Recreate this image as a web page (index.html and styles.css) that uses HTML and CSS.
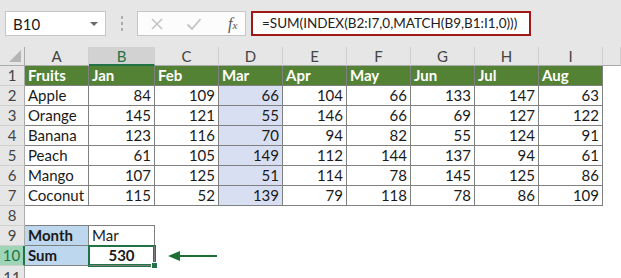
FILE: index.html
```html
<!DOCTYPE html>
<html lang="en">
<head>
    <meta charset="UTF-8">
    <title>INDEX MATCH sum</title>
    <link rel="stylesheet" href="styles.css">
</head>
<body>
    <div class="toolbar">
        <div class="namebox">
            <span>B10</span>
            <span class="caret"></span>
        </div>
        <div class="dots"><i></i><i></i><i></i></div>
        <div class="fbuttons">
            <svg class="ico" width="14" height="14" viewBox="0 0 14 14"><path d="M2 2 L12 12 M12 2 L2 12" stroke="#c3c3c3" stroke-width="1.6" fill="none"/></svg>
            <svg class="ico" width="16" height="14" viewBox="0 0 16 14"><path d="M1.5 7.5 L6 12 L14.5 2" stroke="#c3c3c3" stroke-width="1.8" fill="none"/></svg>
            <span class="fx">f<sub>x</sub></span>
        </div>
        <div class="formula">=SUM(INDEX(B2:I7,0,MATCH(B9,B1:I1,0)))</div>
    </div>

    <div class="sheet">
        <!-- column headers -->
        <div class="ch corner"><span class="tri"></span></div>
        <div class="ch">A</div>
        <div class="ch sel">B</div>
        <div class="ch">C</div>
        <div class="ch">D</div>
        <div class="ch">E</div>
        <div class="ch">F</div>
        <div class="ch">G</div>
        <div class="ch">H</div>
        <div class="ch">I</div>
        <div class="ch"></div>

        <!-- row 1 -->
        <div class="rh">1</div>
        <div class="c hd">Fruits</div>
        <div class="c hd">Jan</div>
        <div class="c hd">Feb</div>
        <div class="c hd">Mar</div>
        <div class="c hd">Apr</div>
        <div class="c hd">May</div>
        <div class="c hd">Jun</div>
        <div class="c hd">Jul</div>
        <div class="c hd">Aug</div>
        <div class="e"></div>

        <div class="rh">2</div>
        <div class="c">Apple</div>
        <div class="c n">84</div><div class="c n">109</div><div class="c n mar">66</div><div class="c n">104</div>
        <div class="c n">66</div><div class="c n">133</div><div class="c n">147</div><div class="c n">63</div>
        <div class="e"></div>

        <div class="rh">3</div>
        <div class="c">Orange</div>
        <div class="c n">145</div><div class="c n">121</div><div class="c n mar">55</div><div class="c n">146</div>
        <div class="c n">66</div><div class="c n">69</div><div class="c n">127</div><div class="c n">122</div>
        <div class="e"></div>

        <div class="rh">4</div>
        <div class="c">Banana</div>
        <div class="c n">123</div><div class="c n">116</div><div class="c n mar">70</div><div class="c n">94</div>
        <div class="c n">82</div><div class="c n">55</div><div class="c n">124</div><div class="c n">91</div>
        <div class="e"></div>

        <div class="rh">5</div>
        <div class="c">Peach</div>
        <div class="c n">61</div><div class="c n">105</div><div class="c n mar">149</div><div class="c n">112</div>
        <div class="c n">144</div><div class="c n">137</div><div class="c n">94</div><div class="c n">61</div>
        <div class="e"></div>

        <div class="rh">6</div>
        <div class="c">Mango</div>
        <div class="c n">107</div><div class="c n">125</div><div class="c n mar">51</div><div class="c n">114</div>
        <div class="c n">78</div><div class="c n">145</div><div class="c n">125</div><div class="c n">86</div>
        <div class="e"></div>

        <div class="rh">7</div>
        <div class="c">Coconut</div>
        <div class="c n">115</div><div class="c n">52</div><div class="c n mar">139</div><div class="c n">79</div>
        <div class="c n">118</div><div class="c n">78</div><div class="c n">86</div><div class="c n">109</div>
        <div class="e"></div>

        <!-- row 8 empty -->
        <div class="rh">8</div>
        <div class="e bb"></div><div class="e bb"></div>
        <div class="e"></div><div class="e"></div><div class="e"></div><div class="e"></div>
        <div class="e"></div><div class="e"></div><div class="e"></div><div class="e"></div>

        <div class="rh">9</div>
        <div class="c lbl">Month</div>
        <div class="c">Mar</div>
        <div class="e"></div><div class="e"></div><div class="e"></div><div class="e"></div>
        <div class="e"></div><div class="e"></div><div class="e"></div><div class="e"></div>

        <div class="rh active">10</div>
        <div class="c lbl">Sum</div>
        <div class="c active-cell">530<span class="handle"></span></div>
        <div class="e arrow">
            <svg width="52" height="12" viewBox="0 0 52 12"><path d="M12 6 H50" stroke="#1e6e35" stroke-width="2"/><path d="M1 6 L13 1 L13 11 Z" fill="#1e6e35"/></svg>
        </div>
        <div class="e"></div><div class="e"></div><div class="e"></div>
        <div class="e"></div><div class="e"></div><div class="e"></div><div class="e"></div>

        <div class="rh last">11</div>
    </div>
</body>
</html>
```

FILE: styles.css
```css
body {
    margin: 0;
    background: #fff;
    font-family: Lato, "Liberation Sans", sans-serif;
    font-size: 15px;
    color: #1a1a1a;
    overflow: hidden;
}

.toolbar {
    height: 47px;
    background: #e6e6e6;
    display: flex;
    align-items: flex-start;
    padding: 11px 0 0 5px;
    box-sizing: border-box;
}

.namebox {
    width: 101px;
    height: 25px;
    box-sizing: border-box;
    border: 1px solid #c6c6c6;
    background: #fff;
    display: flex;
    align-items: center;
    justify-content: space-between;
    padding: 0 7px 0 7px;
}

.caret {
    width: 0;
    height: 0;
    border-left: 4px solid transparent;
    border-right: 4px solid transparent;
    border-top: 4px solid #6b6b6b;
}

.dots {
    width: 31px;
    height: 25px;
    display: flex;
    flex-direction: column;
    align-items: center;
    justify-content: center;
    gap: 3px;
}

.dots i {
    width: 2px;
    height: 3px;
    background: #adadad;
}

.fbuttons {
    width: 109px;
    height: 25px;
    box-sizing: border-box;
    border: 1px solid #c6c6c6;
    background: #fcfcfc;
    display: flex;
    align-items: center;
    padding-left: 12px;
    gap: 22px;
}

.fx {
    font-family: "Liberation Serif", serif;
    font-style: italic;
    font-size: 16px;
    color: #555;
    margin-left: 4px;
}

.fx sub {
    font-size: 11px;
    vertical-align: 0;
}

.formula {
    width: 280px;
    height: 25px;
    margin-left: 5px;
    box-sizing: border-box;
    border: 2px solid #a01818;
    background: #fff;
    padding-left: 9px;
    font-size: 13.5px;
    line-height: 21px;
    color: #222;
    white-space: nowrap;
    overflow: hidden;
}

.sheet {
    display: grid;
    grid-template-columns: 25px 64px 66px 64px 64px 64px 64px 64px 64px 64px 1fr;
    grid-template-rows: 19px;
    grid-auto-rows: 20px;
}

.ch {
    background: #e6e6e6;
    border-right: 1px solid #cfcfcf;
    border-bottom: 1px solid #ababab;
    box-sizing: border-box;
    text-align: center;
    line-height: 18px;
    color: #444;
}

.ch.sel {
    background: #d2d2d2;
    color: #217346;
    border-bottom: 2px solid #217346;
}

.corner {
    position: relative;
    border-right: 1px solid #ababab;
}

.tri {
    position: absolute;
    right: 3px;
    bottom: 3px;
    width: 0;
    height: 0;
    border-left: 12px solid transparent;
    border-bottom: 12px solid #b5b5b5;
}

.rh {
    background: #e6e6e6;
    border-right: 1px solid #ababab;
    border-bottom: 1px solid #cfcfcf;
    box-sizing: border-box;
    text-align: center;
    line-height: 19px;
    color: #444;
}

.rh.last {
    line-height: 22px;
}

.rh.active {
    background: #9fd5b7;
    color: #217346;
    border-right: 2px solid #217346;
}

.c {
    border-right: 1px solid #808080;
    border-bottom: 1px solid #808080;
    box-sizing: border-box;
    padding: 0 3px;
    line-height: 19px;
    white-space: nowrap;
    overflow: hidden;
}

.c.n {
    text-align: right;
}

.c.hd {
    background: #548235;
    color: #fff;
    font-weight: bold;
}

.c.mar {
    background: #d9dff2;
}

.c.lbl {
    background: #bdd7ee;
    font-weight: bold;
}

.e.bb {
    border-bottom: 1px solid #808080;
}

.active-cell {
    position: relative;
    text-align: center;
    font-weight: bold;
    overflow: visible;
    box-shadow: 0 0 0 1px #217346, inset 0 0 0 1px #217346;
}

.handle {
    position: absolute;
    right: -4px;
    bottom: -4px;
    width: 5px;
    height: 5px;
    background: #217346;
    border: 1px solid #fff;
}

.arrow {
    display: flex;
    align-items: center;
    padding-left: 12px;
}
```
